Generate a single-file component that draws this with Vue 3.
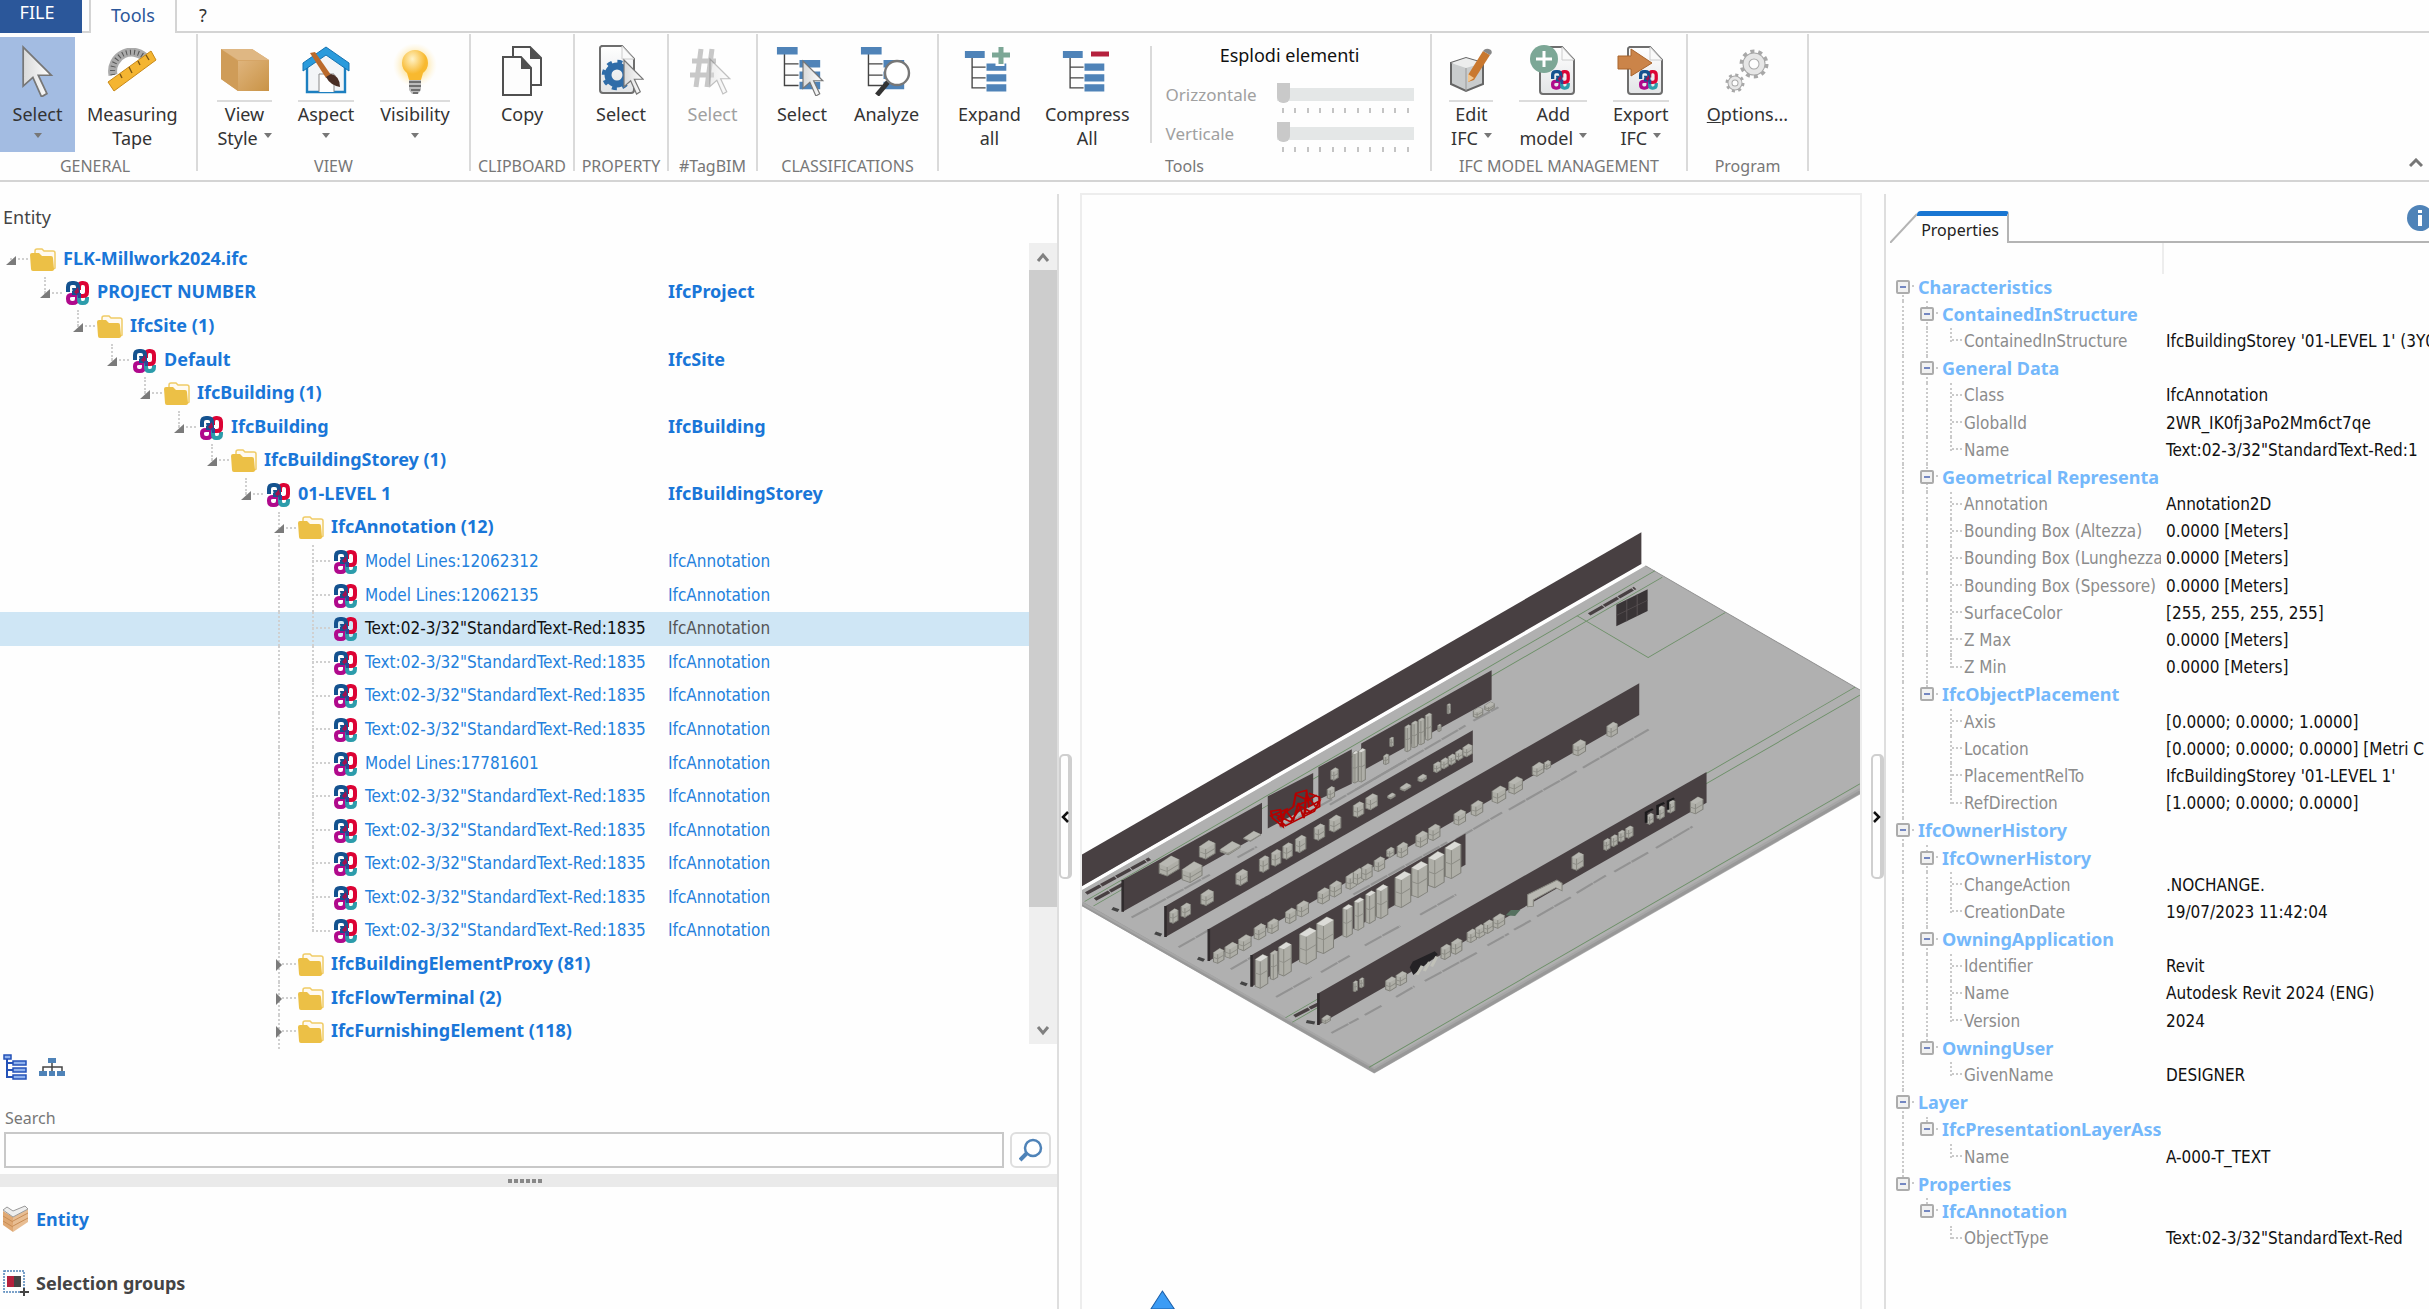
<script setup>
import { ref } from 'vue'

const search = ref('')
const horizontal = ref(0)
const vertical = ref(0)
const selectedRow = ref(11)

/* Ribbon */
const ribbonGroups = [
  { id: 'general', label: 'GENERAL', items: [
    { icon: 'cursor', lines: ['Select'], menu: true, active: true },
    { icon: 'tape', lines: ['Measuring', 'Tape'] },
  ] },
  { id: 'view', label: 'VIEW', items: [
    { icon: 'cube', lines: ['View', 'Style'], menu: true, split: true },
    { icon: 'house', lines: ['Aspect'], menu: true, split: true },
    { icon: 'bulb', lines: ['Visibility'], menu: true, split: true },
  ] },
  { id: 'clipboard', label: 'CLIPBOARD', items: [{ icon: 'copy', lines: ['Copy'] }] },
  { id: 'property', label: 'PROPERTY', items: [{ icon: 'pageGear', lines: ['Select'] }] },
  { id: 'tag', label: '#TagBIM', items: [{ icon: 'hash', lines: ['Select'], disabled: true }] },
  { id: 'classes', label: 'CLASSIFICATIONS', items: [
    { icon: 'treeCursor', lines: ['Select'] },
    { icon: 'treeLens', lines: ['Analyze'] },
  ] },
  { id: 'tools', label: 'Tools', explode: true, items: [
    { icon: 'treePlus', lines: ['Expand', 'all'] },
    { icon: 'treeMinus', lines: ['Compress', 'All'] },
  ] },
  { id: 'ifc', label: 'IFC MODEL MANAGEMENT', items: [
    { icon: 'edit', lines: ['Edit', 'IFC'], menu: true, split: true },
    { icon: 'add', lines: ['Add', 'model'], menu: true, split: true },
    { icon: 'export', lines: ['Export', 'IFC'], menu: true, split: true },
  ] },
  { id: 'program', label: 'Program', items: [{ icon: 'gears', lines: ['Options...'], accel: true }] },
]

/* Entity tree */
const annotationText = 'Text:02-3/32"StandardText-Red:1835'
const branch = (level, name, type, icon) => ({ level, name, type, icon, bold: true, open: true, last: true })
const leafNames = [
  'Model Lines:12062312', 'Model Lines:12062135', annotationText, annotationText, annotationText, annotationText,
  'Model Lines:17781601', annotationText, annotationText, annotationText, annotationText, annotationText,
]
const treeRows = [
  branch(0, 'FLK-Millwork2024.ifc', '', 'folder'),
  branch(1, 'PROJECT NUMBER', 'IfcProject', 'ifc'),
  branch(2, 'IfcSite (1)', '', 'folder'),
  branch(3, 'Default', 'IfcSite', 'ifc'),
  branch(4, 'IfcBuilding (1)', '', 'folder'),
  branch(5, 'IfcBuilding', 'IfcBuilding', 'ifc'),
  branch(6, 'IfcBuildingStorey (1)', '', 'folder'),
  branch(7, '01-LEVEL 1', 'IfcBuildingStorey', 'ifc'),
  { ...branch(8, 'IfcAnnotation (12)', '', 'folder'), last: false },
  ...leafNames.map((name, i) => ({ level: 9, name, type: 'IfcAnnotation', icon: 'ifc', leaf: true, last: i === 11, rails: [8] })),
  { ...branch(8, 'IfcBuildingElementProxy (81)', '', 'folder'), open: false, last: false },
  { ...branch(8, 'IfcFlowTerminal (2)', '', 'folder'), open: false, last: false },
  { ...branch(8, 'IfcFurnishingElement (118)', '', 'folder'), open: false, last: false },
]
const indent = (level) => Math.round(level * 33.5)

/* Property grid */
const sections = [
  ['Characteristics', [
    ['ContainedInStructure', [['ContainedInStructure', "IfcBuildingStorey '01-LEVEL 1' (3Y0"]]],
    ['General Data', [['Class', 'IfcAnnotation'], ['GlobalId', '2WR_IK0fj3aPo2Mm6ct7qe'], ['Name', 'Text:02-3/32"StandardText-Red:1']]],
    ['Geometrical Representa', [
      ['Annotation', 'Annotation2D'], ['Bounding Box (Altezza)', '0.0000 [Meters]'],
      ['Bounding Box (Lunghezza', '0.0000 [Meters]'], ['Bounding Box (Spessore)', '0.0000 [Meters]'],
      ['SurfaceColor', '[255, 255, 255, 255]'], ['Z Max', '0.0000 [Meters]'], ['Z Min', '0.0000 [Meters]']]],
    ['IfcObjectPlacement', [
      ['Axis', '[0.0000; 0.0000; 1.0000]'], ['Location', '[0.0000; 0.0000; 0.0000] [Metri C'],
      ['PlacementRelTo', "IfcBuildingStorey '01-LEVEL 1'"], ['RefDirection', '[1.0000; 0.0000; 0.0000]']]],
  ]],
  ['IfcOwnerHistory', [
    ['IfcOwnerHistory', [['ChangeAction', '.NOCHANGE.'], ['CreationDate', '19/07/2023 11:42:04']]],
    ['OwningApplication', [['Identifier', 'Revit'], ['Name', 'Autodesk Revit 2024 (ENG)'], ['Version', '2024']]],
    ['OwningUser', [['GivenName', 'DESIGNER']]],
  ]],
  ['Layer', [['IfcPresentationLayerAss', [['Name', 'A-000-T_TEXT']]]]],
  ['Properties', [['IfcAnnotation', [['ObjectType', 'Text:02-3/32"StandardText-Red']]]]],
]
const props = []
sections.forEach(([title, groups], s) => {
  const lastSection = s === sections.length - 1
  props.push({ level: 0, name: title, value: '', rails: [s === 0 ? 'start' : lastSection ? 'end' : 'full'] })
  groups.forEach(([group, fields], g) => {
    const lastGroup = g === groups.length - 1
    const outer = lastSection ? 'none' : 'full'
    props.push({ level: 1, name: group, value: '', rails: [outer, lastGroup ? 'end' : 'full'] })
    fields.forEach(([name, value], f) => {
      props.push({ level: 2, name, value, rails: [outer, lastGroup ? 'none' : 'full', f === fields.length - 1 ? 'end' : 'full'] })
    })
  })
})

/* Model scene */
const walls = [
  '118,992 385,790 385,870 118,1075', '396,773 483,712 483,795 396,857',
  '493,697 557,650 557,740 493,782', '575,635 825,443 825,520 575,708',
  '200,1060 789,600 789,683 200,1141', '283,1120 1108,477 1108,560 283,1204',
  '365,1188 775,870 775,952 365,1271', '493,1288 1237,709 1237,790 493,1371',
]
const boxes = [
  [188, 950, 38, 24], [265, 905, 30, 26], [232, 965, 38, 26], [305, 912, 38, 6], [350, 882, 32, 2],
  [517, 706, 14, 22], [510, 755, 14, 22], [559, 660, 10, 76], [570, 655, 13, 78], [618, 668, 10, 20], [630, 622, 7, 20],
  [659, 592, 11, 62], [672, 582, 11, 62], [685, 574, 11, 62], [698, 562, 12, 62], [740, 534, 6, 22], [722, 588, 6, 14],
  [790, 550, 18, 14], [812, 536, 18, 10],
  [208, 1076, 16, 26], [230, 1062, 18, 24], [268, 1030, 24, 24], [335, 976, 22, 26],
  [380, 938, 18, 30], [403, 922, 18, 30], [425, 904, 18, 30], [449, 886, 20, 30], [485, 856, 20, 28], [514, 834, 22, 28],
  [560, 798, 20, 26], [584, 778, 22, 26], [626, 772, 14, 5], [650, 750, 20, 5], [684, 724, 16, 8],
  [714, 690, 14, 18], [728, 680, 14, 18], [742, 670, 14, 18], [756, 658, 14, 18], [770, 646, 18, 20],
  [292, 1182, 20, 24], [314, 1168, 24, 24], [340, 1148, 24, 24], [370, 1118, 22, 26], [396, 1104, 20, 24],
  [430, 1076, 20, 26], [452, 1058, 22, 26], [492, 1024, 22, 26], [515, 1006, 22, 26],
  [546, 984, 20, 28], [560, 972, 20, 28], [576, 960, 20, 28], [600, 942, 20, 24], [624, 914, 14, 16], [644, 904, 20, 26],
  [680, 876, 22, 26], [704, 858, 22, 26], [753, 820, 22, 24], [786, 796, 22, 24], [826, 760, 26, 26], [858, 736, 26, 26],
  [903, 696, 22, 20], [926, 686, 12, 14], [981, 638, 24, 24], [1046, 590, 20, 24],
  [372, 1200, 24, 70], [401, 1184, 14, 66], [417, 1168, 24, 70],
  [457, 1134, 32, 72], [490, 1106, 32, 72],
  [540, 1066, 18, 72], [562, 1048, 18, 72], [584, 1030, 18, 72], [604, 1016, 22, 72],
  [640, 986, 30, 72], [672, 960, 30, 72], [704, 934, 30, 72], [736, 908, 30, 74],
  [500, 1354, 16, 10], [560, 1260, 8, 22], [572, 1252, 8, 20], [622, 1256, 20, 22], [642, 1242, 20, 22],
  [728, 1170, 18, 26], [748, 1156, 20, 26], [778, 1130, 18, 22], [794, 1118, 18, 22], [810, 1106, 18, 22], [828, 1092, 22, 22],
  [979, 932, 22, 30], [1040, 890, 12, 22], [1054, 880, 12, 22], [1068, 868, 12, 22], [1082, 858, 14, 22],
  [1123, 824, 12, 20], [1142, 806, 14, 24], [1162, 790, 14, 24], [1206, 788, 24, 26],
]
const body = ([x, y, w, h]) => `${x},${y} ${x + w * 0.6},${y - w * 0.55} ${x + w},${y - w * 0.3} ${x + w},${y + h - w * 0.3} ${x + w * 0.4},${y + h + w * 0.2} ${x},${y + h}`
const lid = ([x, y, w]) => `${x},${y} ${x + w * 0.6},${y - w * 0.55} ${x + w},${y - w * 0.3} ${x + w * 0.4},${y + w * 0.2}`
const edge = ([x, y, w, h]) => `M${x + w * 0.4} ${y + w * 0.2}V${y + h + w * 0.2}M${x} ${y + h / 2}l${w * 0.4} ${w * 0.2}l${w * 0.6} ${-w * 0.5}`
const shadows = [
  'M135 1090L285 978', 'M338 933L375 905', 'M420 855L520 780', 'M515 795L660 680', 'M565 755L775 588', 'M790 575L838 540',
  'M225 1168L395 1035', 'M325 1225L470 1112', 'M480 1103L560 1040', 'M560 1030L740 893', 'M757 885L845 815', 'M858 808L988 707', 'M1000 698L1126 598',
  'M412 1298L480 1246', 'M498 1233L553 1190', 'M582 1163L650 1112', 'M688 1083L757 1030',
  'M518 1392L570 1354', 'M582 1345L615 1320', 'M642 1298L677 1270', 'M697 1256L797 1182', 'M817 1163L858 1132', 'M868 1122L900 1098', 'M912 1087L978 1036', 'M988 1026L1044 980', 'M1060 970L1125 920', 'M1140 908L1210 852',
]
</script>

<template>
  <svg class="defs" width="0" height="0" aria-hidden="true">
    <defs>
      <linearGradient id="arrowFill" x1="0" x2="1"><stop offset="0" stop-color="#d9d9d9" /><stop offset="1" stop-color="#fff" /></linearGradient>
      <linearGradient id="woodFront" x1="0" y1="0" x2="1" y2="1"><stop offset="0" stop-color="#dfb47c" /><stop offset="1" stop-color="#c99346" /></linearGradient>
      <linearGradient id="pageFill" x1="0" y1="0" x2="0" y2="1"><stop offset="0" stop-color="#fff" /><stop offset="1" stop-color="#e2e4e6" /></linearGradient>
      <radialGradient id="glow"><stop offset="0.5" stop-color="#ffd35c" stop-opacity="0.9" /><stop offset="1" stop-color="#ffe9b0" stop-opacity="0" /></radialGradient>
      <radialGradient id="bulbFill" cx="0.4" cy="0.3"><stop offset="0" stop-color="#fff3c8" /><stop offset="1" stop-color="#f8b92f" /></radialGradient>
      <g id="pointer"><path d="M0 0V36L9 28L17 46L22 43L14 26H26Z" fill="url(#arrowFill)" stroke="#777" stroke-width="1.6" /></g>
      <g id="ifcMark" fill="none" stroke-width="4">
        <path d="M10 14H6Q2 14 2 17V18Q2 22 6 22H7Q11 22 11 18V12" stroke="#b0098c" />
        <path d="M13 14V18Q13 22 16 22H17Q21 22 21 18V16" stroke="#2c9cab" />
        <path d="M13 15H17Q21 15 21 11V6Q21 2 17 2H16Q13 2 13 6V9" stroke="#dc0334" />
        <path d="M2 11V6Q2 2 6 2H8Q12 2 12 6V12H6" stroke="#14528f" />
        <path d="M6 7H10V12H7Z" fill="#14528f" stroke="none" />
        <path d="M8 11L12 6L13 11L11 14Z" fill="#a1104f" stroke="none" />
        <path d="M11 12H15V17H12Z" fill="#2b4796" stroke="none" />
      </g>
      <g id="nodeTree">
        <path d="M9 8V42H24M9 19H24M9 31H24" fill="none" stroke="#444" stroke-width="1.5" />
        <path d="M1 1H23V9H1ZM25 15H47V23H25ZM25 27H47V35H25ZM25 38H47V46H25Z" fill="#4f83b8" />
      </g>
      <g id="page"><path d="M3 1H24L36 14V45Q36 48 33 48H5Q2 48 2 45V3Q2 1 5 1Z" fill="url(#pageFill)" stroke="#6e6e6e" stroke-width="2" /><path d="M24 1V14H36Z" fill="#fafafa" stroke="#ccc" /></g>
    </defs>
  </svg>

  <div class="app">
    <nav class="tabs" aria-label="Ribbon tabs">
      <button class="file-tab">FILE</button>
      <span class="tab-gap"></span>
      <button class="tab current">Tools</button>
      <button class="tab">?</button>
    </nav>

    <header class="ribbon">
      <section v-for="group in ribbonGroups" :key="group.id" class="group" :class="'group-' + group.id">
        <div class="group-body">
          <button v-for="(item, i) in group.items" :key="i" class="command" :class="{ active: item.active, split: item.split }" :disabled="item.disabled">
            <span class="command-icon">
              <svg v-if="item.icon === 'cursor'" width="34" height="52" viewBox="0 0 34 52"><use href="#pointer" x="2" y="2" transform="scale(1.08)" /></svg>
              <svg v-else-if="item.icon === 'tape'" width="54" height="46" viewBox="0 0 54 46">
                <path d="M8 27A19 19 0 0 1 42 12" fill="none" stroke="#aaa" stroke-width="9" /><path d="M8 27A19 19 0 0 1 42 12" fill="none" stroke="#555" stroke-width="5" stroke-dasharray="1 3" />
                <path d="M3 34L46 3L51 12L9 43Z" fill="#f4b532" stroke="#c98a18" /><path d="M15 26l2 4M24 19l3 6M33 13l2 4M41 7l3 5" stroke="#7a5514" stroke-width="1.4" />
              </svg>
              <svg v-else-if="item.icon === 'cube'" width="50" height="44" viewBox="0 0 50 44"><path d="M1 1H32L49 12V43H18L1 31Z" fill="#d6a566" /><path d="M18 13H49V43H18Z" fill="url(#woodFront)" /><path d="M1 1L18 13V43L1 31Z" fill="#cf9c58" /><path d="M1 1H32L49 12H18Z" fill="#dfb783" /></svg>
              <svg v-else-if="item.icon === 'house'" width="48" height="48" viewBox="0 0 48 48">
                <path d="M5 18L24 5L43 18V46H5Z" fill="#f3f5f7" stroke="#1c7fc0" stroke-width="2.4" /><path d="M17 46V28H32V46" fill="#fff" stroke="#888" />
                <path d="M1 17L24 1L47 17V25L24 9L1 25Z" fill="#2a9bdc" stroke="#1673b1" /><path d="M8 7L13 6L29 29L24 32Z" fill="#bb6a2b" /><path d="M24 31L29 28Q38 30 38 41Q28 39 24 31Z" fill="#4a2f25" />
              </svg>
              <svg v-else-if="item.icon === 'bulb'" width="52" height="52" viewBox="0 0 52 52"><circle cx="26" cy="21" r="22" fill="url(#glow)" opacity="0.6" /><path d="M26 6A13 13 0 0 1 39 19Q39 25 34 29L32 36H20L18 29Q13 25 13 19A13 13 0 0 1 26 6Z" fill="url(#bulbFill)" /><path d="M20 36H32V46L29 50H23L20 46Z" fill="#bbb" /><path d="M20 38H32M20 42H32M22 46H31M24 49H29" stroke="#555" stroke-width="1.6" /></svg>
              <svg v-else-if="item.icon === 'copy'" width="40" height="50" viewBox="0 0 40 50"><g fill="#fdfdfd" stroke="#505050" stroke-width="2"><path d="M11 1H28L39 12V39H11Z" /><path d="M1 11H19L29 22V49H1Z" /></g><path d="M28 1V13H39ZM19 11V23H29Z" fill="#505050" /></svg>
              <svg v-else-if="item.icon === 'pageGear'" width="46" height="52" viewBox="0 0 46 52"><use href="#page" /><circle cx="19" cy="30" r="9" fill="none" stroke="#2f6ca8" stroke-width="7" /><circle cx="19" cy="30" r="13.5" fill="none" stroke="#2f6ca8" stroke-width="3.5" stroke-dasharray="5 5.6" /><use href="#pointer" transform="translate(26 15) scale(.74)" /></svg>
              <svg v-else-if="item.icon === 'hash'" width="46" height="50" viewBox="0 0 46 50"><path d="M11 3L6 41M22 3L17 41M2 15H26M0 29H24" stroke="#c8c8c8" stroke-width="5" /><g opacity="0.45"><use href="#pointer" transform="translate(20 13) scale(.76)" /></g></svg>
              <svg v-else-if="item.icon === 'treeCursor'" width="52" height="50" viewBox="0 0 52 50"><use href="#nodeTree" transform="scale(.94)" /><use href="#pointer" transform="translate(27 15) scale(.76)" /></svg>
              <svg v-else-if="item.icon === 'treeLens'" width="52" height="50" viewBox="0 0 52 50"><use href="#nodeTree" transform="scale(.94)" /><path d="M28 36L17 49" stroke="#333" stroke-width="5" /><circle cx="37" cy="27" r="12" fill="#fff" stroke="#777" stroke-width="2.4" /></svg>
              <svg v-else-if="item.icon === 'treePlus'" width="50" height="50" viewBox="0 0 50 50"><use href="#nodeTree" transform="translate(0 4) scale(.9)" /><path d="M36 0V20M27 10H46" stroke="#fefefe" stroke-width="9" /><path d="M37 1V18M28 9H46" stroke="#7ca796" stroke-width="5" /></svg>
              <svg v-else-if="item.icon === 'treeMinus'" width="50" height="50" viewBox="0 0 50 50"><use href="#nodeTree" transform="translate(0 4) scale(.9)" /><path d="M29 8H47" stroke="#b5213d" stroke-width="5" /></svg>
              <svg v-else-if="item.icon === 'edit'" width="44" height="46" viewBox="0 0 44 46"><path d="M2 16L17 11L34 16V37L17 44L2 37Z" fill="#c9cccd" stroke="#666" stroke-width="2" /><path d="M2 16L17 21L34 16L17 11Z" fill="#eceded" /><path d="M17 21V44" stroke="#999" /><path d="M34 4L41 8L25 33L19 35V28Z" fill="#c9782f" /><path d="M19 35V27L25 31Z" fill="#f3c78f" /><path d="M34 4Q37 0 42 3Q44 6 41 8Z" fill="#888" /></svg>
              <svg v-else-if="item.icon === 'add'" width="48" height="52" viewBox="0 0 48 52"><use href="#page" transform="translate(9 2)" /><use href="#ifcMark" transform="translate(22 26) scale(.82)" /><circle cx="15" cy="15" r="14" fill="#7ca796" /><path d="M15 7V23M7 15H23" stroke="#fff" stroke-width="3" /></svg>
              <svg v-else-if="item.icon === 'export'" width="48" height="52" viewBox="0 0 48 52"><use href="#page" transform="translate(9 2)" /><use href="#ifcMark" transform="translate(22 26) scale(.82)" /><path d="M1 12H14V5L35 19L14 32V25H1Z" fill="#cb8449" stroke="#a9642c" /></svg>
              <svg v-else width="46" height="46" viewBox="0 0 46 46"><g fill="none"><circle cx="30" cy="16" r="8" stroke="#a8a8a8" stroke-width="7" /><circle cx="30" cy="16" r="12.5" stroke="#a8a8a8" stroke-width="4" stroke-dasharray="4 3.85" /><circle cx="30" cy="16" r="8" stroke="#e6e6e6" stroke-width="5" /><circle cx="11" cy="35" r="5" stroke="#a8a8a8" stroke-width="5" /><circle cx="11" cy="35" r="8" stroke="#a8a8a8" stroke-width="3" stroke-dasharray="3 3.28" /><circle cx="11" cy="35" r="5" stroke="#e6e6e6" stroke-width="3" /></g></svg>
            </span>
            <span class="command-line"><template v-if="item.accel"><u>O</u>ptions...</template><template v-else>{{ item.lines[0] }}</template></span>
            <span class="command-line">{{ item.lines[1] }}<i v-if="item.menu" class="caret" :class="{ beside: item.lines[1] }"></i></span>
          </button>
          <div v-if="group.explode" class="explode">
            <div class="explode-title">Esplodi elementi</div>
            <label class="slider"><span>Orizzontale</span><span class="slider-control"><input v-model="horizontal" type="range" min="0" max="10" disabled /><span class="ticks"><i v-for="n in 11" :key="n"></i></span></span></label>
            <label class="slider"><span>Verticale</span><span class="slider-control"><input v-model="vertical" type="range" min="0" max="10" disabled /><span class="ticks"><i v-for="n in 11" :key="n"></i></span></span></label>
          </div>
        </div>
        <div class="group-label">{{ group.label }}</div>
      </section>
      <button class="collapse" aria-label="Collapse ribbon"><svg width="14" height="10" viewBox="0 0 14 10"><path d="M1 8L7 2L13 8" fill="none" stroke="#777" stroke-width="3" /></svg></button>
    </header>

    <main class="work">
      <aside class="entity">
        <h2 class="pane-title">Entity</h2>
        <div class="tree-box">
          <div class="tree" role="tree">
            <div v-for="(row, i) in treeRows" :key="i" class="tree-row" :class="{ selected: i === selectedRow, bold: row.bold }" role="treeitem" @click="selectedRow = i">
              <div class="tree-name">
                <span v-for="rail in row.rails" :key="rail" class="rail full" :style="{ left: 10 + indent(rail) + 'px' }"></span>
                <span v-if="row.level" class="rail" :class="row.last ? 'half' : 'full'" :style="{ left: 10 + indent(row.level) + 'px' }"></span>
                <span class="branch" :style="{ left: 10 + indent(row.level) + 'px' }"></span>
                <span class="indent" :style="{ width: 6 + indent(row.level) + 'px' }"></span>
                <svg class="twisty" width="10" height="14" viewBox="0 0 10 14"><path v-if="!row.leaf && row.open" d="M10 3V12H0Z" fill="#7b7b7b" /><path v-else-if="!row.leaf" d="M2 1L8 7L2 13Z" fill="#7b7b7b" /></svg>
                <svg v-if="row.icon === 'folder'" class="node-icon" width="26" height="24" viewBox="0 0 26 24"><path d="M5 5V3Q5 1 7 1H12L14 3H23Q25 3 25 5V20L22 22" fill="#fffaf0" stroke="#f0cb66" stroke-width="1.5" /><path d="M0 7Q0 5 2 5H9L12 8H21Q23 8 23 10L24 21Q24 23 22 23H3Q1 23 1 21Z" fill="#ecc046" /></svg>
                <svg v-else class="node-icon" width="26" height="24" viewBox="-2 0 26 24"><use href="#ifcMark" /></svg>
                <span class="tree-label">{{ row.name }}</span>
              </div>
              <div class="tree-type">{{ row.type }}</div>
            </div>
          </div>
          <div class="scrollbar">
            <button aria-label="Scroll up"><svg width="14" height="12" viewBox="0 0 14 12"><path d="M2 10L7 4L12 10" fill="none" stroke="#808080" stroke-width="3" /></svg></button>
            <span class="thumb"></span>
            <span class="track"></span>
            <button aria-label="Scroll down"><svg width="14" height="12" viewBox="0 0 14 12"><path d="M2 2L7 8L12 2" fill="none" stroke="#808080" stroke-width="3" /></svg></button>
          </div>
        </div>

        <div class="tree-tools">
          <button aria-label="Tree view"><svg width="24" height="26" viewBox="0 0 24 26"><path d="M4 4V23H10M4 9H10M4 16H10" fill="none" stroke="#2452b8" stroke-width="2" /><g fill="#8fb2ee" stroke="#2452b8" stroke-width="1.5"><path d="M1 1H8V5H1Z" /><path d="M10 7H23V11H10Z" /><path d="M10 14H23V18H10Z" /><path d="M10 21H23V25H10Z" /></g></svg></button>
          <button aria-label="Structure view"><svg width="26" height="20" viewBox="0 0 26 20"><path d="M13 4V14M4 14V10H23V14" fill="none" stroke="#444" stroke-width="1.5" /><path d="M9 1H17V6H9ZM0 14H8V19H0ZM10 14H16V19H10ZM18 14H26V19H18Z" fill="#4f83b8" /></svg></button>
        </div>

        <label class="search-label" for="entity-search">Search</label>
        <div class="search">
          <input id="entity-search" v-model="search" type="text" />
          <button aria-label="Search"><svg width="24" height="24" viewBox="0 0 24 24"><path d="M9 14L1 22" stroke="#4f83b8" stroke-width="4" /><circle cx="14" cy="10" r="8" fill="#fff" stroke="#4f83b8" stroke-width="2.5" /></svg></button>
        </div>
        <div class="splitter"><i v-for="n in 6" :key="n"></i></div>

        <button class="mode current"><svg width="28" height="28" viewBox="0 0 28 28"><path d="M1 6L11 12V27L1 20Z" fill="#dfa873" /><path d="M11 12L26 4V17L11 27Z" fill="#e8bd92" /><path d="M1 5L5 2L11 6L23 1L26 4L11 12Z" fill="#eee" stroke="#999" /><path d="M11 16L26 8M11 21L26 13M1 11L11 17M1 16L11 22" stroke="#c98d55" /></svg>Entity</button>
        <button class="mode"><svg width="28" height="28" viewBox="0 0 28 28"><path d="M2 2H22V23H2Z" fill="none" stroke="#4f83b8" stroke-width="1.5" stroke-dasharray="2 1" /><path d="M5 7H12V18H5Z" fill="#b5213d" /><path d="M12 7H19V18H12Z" fill="#444" /><path d="M22 19V27M18 23H27" stroke="#444" stroke-width="2" /></svg>Selection groups</button>
      </aside>

      <section class="stage">
        <button class="handle" aria-label="Collapse left pane"><svg width="10" height="14" viewBox="0 0 10 14"><path d="M8 2L3 7L8 12" fill="none" stroke="#111" stroke-width="2.5" /></svg></button>
        <div class="frame">
          <svg class="scene" viewBox="40 -800 1491 2914" preserveAspectRatio="none" role="img" aria-label="3D model">
            <path d="M40 1018L1120 170L1531 495V768L600 1498L40 1060Z" fill="#b0b0b0" />
            <path d="M40 1054L600 1490L1531 760" fill="none" stroke="#989898" stroke-width="10" />
            <path d="M40 1052L600 1484L1531 754" fill="none" stroke="#a6a6a6" stroke-width="5" />
            <path d="M1120 170L1531 495" stroke="#8c8c8c" stroke-width="2" />
            <path d="M40 925L1112 82V165L40 1008Z" fill="#484042" />
            <path d="M40 1013L1112 171" stroke="#fff" stroke-width="6" />
            <path d="M45 1048L1138 183M62 1060L1152 200M988 300L1125 410L1273 292M430 1352L1522 487M443 1364L1531 508M590 1482L1531 740" fill="none" stroke="#6b8f66" stroke-width="2" />
            <path d="M1012 297L1100 228M48 1027L170 936M65 1043L118 1003M447 1348L493 1316" stroke="#484042" stroke-width="8" stroke-dasharray="34 2" />
            <path v-for="(d, i) in shadows" :key="'s' + i" :d="d" stroke="#929292" stroke-width="5" stroke-dasharray="40 2" />
            <polygon v-for="(points, i) in walls" :key="'w' + i" :points="points" fill="#484042" />
            <path d="M118 992V1075M200 1060V1141M283 1120V1204M365 1188V1271M493 1288V1371" stroke="#302b2d" stroke-width="5" />
            <path d="M1064 272L1124 231V288L1064 328Z" fill="#393436" /><path d="M1084 259V315M1104 245V301M1064 300L1124 260" stroke="#575052" stroke-width="2" />
            <g v-for="(b, i) in boxes" :key="'b' + i" stroke="#80807a" stroke-width="2">
              <polygon :points="body(b)" fill="#aeaea7" />
              <polygon :points="lid(b)" :fill="b[3] > 69 ? '#dcdcd8' : '#b8b8b2'" stroke="none" />
              <path :d="edge(b)" fill="none" stroke="#8c8c85" />
            </g>
            <path d="M894 1030L950 992L960 1000V1020L948 1012L905 1044V1060L894 1062Z" fill="#b9b9b2" stroke="#85857e" stroke-width="2" />
            <path d="M668 1220L674 1205L716 1178L722 1186L675 1240Z" fill="#242225" /><path d="M682 1240L692 1216M696 1230L706 1206M710 1218L720 1192" stroke="#c0c0b8" stroke-width="6" />
            <path d="M852 1084L862 1070L880 1070L870 1086Z" fill="#55705f" />
            <path d="M1121 842V815L1134 806M1143 822V798L1156 790M1163 808V786L1175 778" fill="none" stroke="#1c1b1c" stroke-width="5" />
            <path d="M98 1066L110 1072M180 1130L192 1136M262 1196L274 1202M344 1260L356 1266M470 1362L486 1366" stroke="#444" stroke-width="8" />
            <g fill="none" stroke="#b50000" stroke-width="4"><path d="M402 812L420 808L425 852L405 830ZM415 830L445 800L450 765L470 757L475 800L495 785L485 812L430 850Z" /><path d="M448 768L468 780V820M450 800L490 770M410 820L440 840L460 800L480 815M420 852L430 810L445 835L455 790L465 830L470 770L488 800M475 765L495 775V800L470 818M400 825L435 805" /></g>
            <path d="M194 2067L217 2114H172Z" fill="#3b9cf5" stroke="#1b5ea8" stroke-width="2" />
          </svg>
        </div>
        <button class="handle" aria-label="Collapse right pane"><svg width="10" height="14" viewBox="0 0 10 14"><path d="M2 2L7 7L2 12" fill="none" stroke="#111" stroke-width="2.5" /></svg></button>
      </section>

      <aside class="inspector">
        <div class="inspector-tabs">
          <svg class="slant" width="27" height="32" viewBox="0 0 27 32"><path d="M0 32L27 3" stroke="#b4b4b4" stroke-width="2" /></svg>
          <button class="inspector-tab">Properties</button>
          <button class="info" aria-label="Information"><svg width="26" height="26" viewBox="0 0 26 26"><circle cx="13" cy="13" r="13" fill="#4f83b8" /><path d="M11 5H15V8H11ZM11 10H15V21H11Z" fill="#fff" /></svg></button>
        </div>
        <div class="column-head"></div>
        <table class="props">
          <colgroup><col class="name-col" /><col /></colgroup>
          <tbody>
            <tr v-for="(row, i) in props" :key="i" :class="'level' + row.level">
              <th scope="row">
                <div class="prop-name">
                  <span v-for="(rail, r) in row.rails" :key="r" class="prop-rail" :class="rail" :style="{ left: 16 + r * 24 + 'px' }"></span>
                  <span class="prop-branch"></span>
                  <svg v-if="row.level < 2" class="toggle" width="14" height="14" viewBox="0 0 14 14"><rect x="1" y="1" width="12" height="12" rx="1" fill="#f1f1f1" stroke="#acacac" stroke-width="2" /><path d="M4 7H10" stroke="#4a63b0" stroke-width="1.5" /></svg>
                  <span>{{ row.name }}</span>
                </div>
              </th>
              <td>{{ row.value }}</td>
            </tr>
          </tbody>
        </table>
      </aside>
    </main>
  </div>
</template>

<style>
body { background: #fefefe; overflow: hidden; }
</style>

<style scoped>
* { box-sizing: border-box; }
.defs { position: absolute; }
button { font: inherit; color: inherit; background: none; border: 0; padding: 0; margin: 0; }
svg { display: block; flex: none; }
.app { display: flex; flex-direction: column; min-height: 100vh; font-family: "Noto Sans", "Open Sans", sans-serif; font-size: 16px; color: #333; background: #fefefe; white-space: nowrap; }

.tabs { display: flex; height: 33px; font-size: 18px; line-height: 24px; box-shadow: inset 0 -2px #d4d4d4; }
.file-tab { width: 82px; background: #2b579a; color: #fff; padding: 0 8px 10px 0; }
.tab-gap { width: 7px; }
.tab { width: 52px; padding-bottom: 4px; }
.tab.current { width: 88px; color: #2b579a; background: #fefefe; border: solid #d4d4d4; border-width: 0 2px; }

.ribbon { display: flex; height: 149px; border-bottom: 2px solid #d4d4d4; }
.group { position: relative; display: flex; flex-direction: column; padding-top: 4px; }
.group::after { content: ""; position: absolute; right: 0; top: 1px; width: 2px; height: 137px; background: #dadada; }
.group-general { width: 198px; }
.group-view { width: 273px; }
.group-clipboard { width: 104px; }
.group-property { width: 94px; }
.group-tag { width: 89px; }
.group-classes { width: 181px; }
.group-tools { width: 493px; }
.group-ifc { width: 256px; }
.group-program { width: 121px; }
.group-body { display: flex; justify-content: center; gap: 18px; height: 117px; padding-right: 2px; }
.group-general .group-body { justify-content: flex-start; gap: 8px; }
.group-tools .group-body { justify-content: flex-start; gap: 16px; padding-left: 15px; }
.group-label { font-size: 16px; line-height: 28px; text-align: center; color: #777; padding-right: 2px; }
.group-general .group-label { padding-right: 8px; }
.command { display: flex; flex-direction: column; align-items: center; font-size: 18px; line-height: 24px; padding: 0 4px; }
.command.active { width: 75px; background: #a3bce2; }
.command:disabled { color: #a0a0a0; }
.command-icon { display: flex; justify-content: center; align-items: center; align-self: stretch; height: 65px; padding-top: 2px; }
.split .command-icon { border-bottom: 2px solid #dcdcdc; }
.command-line { display: flex; align-items: center; height: 24px; }
.caret { border: solid transparent; border-width: 5px 4px 0; border-top-color: #777; margin-bottom: 6px; }
.caret.beside { margin-left: 6px; }
.explode { position: relative; flex: none; padding: 4px 0 0 16px; width: 280px; }
.explode::before { content: ""; position: absolute; left: 0; top: 9px; width: 2px; height: 97px; background: #dadada; }
.explode-title { font-size: 18px; line-height: 28px; text-align: center; color: #111; padding-right: 16px; }
.slider { display: flex; justify-content: space-between; height: 39px; font-size: 17px; line-height: 24px; color: #a0a0a0; padding: 14px 16px 0 0; }
.slider-control { display: flex; flex-direction: column; width: 137px; gap: 5px; }
.slider input { appearance: none; width: 137px; height: 20px; margin: 0; background: linear-gradient(#e4e7e7, #e4e7e7) 0 5px / 100% 13px no-repeat; }
.slider input::-webkit-slider-thumb { appearance: none; width: 13px; height: 20px; background: #c9c9c9; border-radius: 0 0 6px 6px; }
.ticks { display: flex; justify-content: space-between; padding: 0 5px; }
.ticks i { width: 2px; height: 5px; background: #c4c4c4; }
.collapse { margin: auto 6px 12px auto; }

.work { flex: 1; display: grid; grid-template-columns: 1059fr 825fr 545fr; }
.entity { display: flex; flex-direction: column; min-width: 0; margin-top: 12px; border-right: 2px solid #dedede; }
.pane-title { margin: 9px 0 12px 3px; font-size: 18px; line-height: 28px; font-weight: 400; color: #444; }
.tree-box { display: flex; height: 801px; font-family: "DejaVu Sans Condensed", "Noto Sans", sans-serif; font-size: 17px; line-height: 24px; }
.tree { flex: 1; min-width: 0; display: grid; grid-auto-rows: 1fr; height: 806px; }
.tree-row { display: flex; color: #2381dd; min-height: 0; }
.tree-row.bold { font-family: "Noto Sans", sans-serif; font-size: 18px; font-weight: 700; color: #1976d8; }
.tree-row.selected { background: #cfe6f5; color: #111; }
.selected .tree-type { color: #555; }
.tree-name { position: relative; display: flex; align-items: center; width: 662px; overflow: hidden; }
.twisty { position: relative; margin-right: 14px; }
.node-icon { position: relative; margin-right: 7px; }
.tree-label, .tree-type { padding-bottom: 2px; }
.bold .tree-label, .bold .tree-type { padding-bottom: 4px; }
.tree-type { display: flex; align-items: center; padding-left: 6px; }
.rail { position: absolute; top: 0; width: 0; border-left: 2px dotted #d0d0d0; }
.rail.full { bottom: 0; }
.rail.half { height: 16px; }
.branch { position: absolute; top: 15px; width: 18px; border-top: 2px dotted #d0d0d0; }
.scrollbar { display: flex; flex-direction: column; width: 28px; background: #efefef; }
.scrollbar button { display: flex; justify-content: center; align-items: center; height: 27px; }
.thumb { flex: 637; background: #cdcdcd; }
.track { flex: 110; }
.tree-tools { display: flex; align-items: center; gap: 12px; padding: 8px 0 0 3px; height: 38px; }
.search-label { margin: 24px 0 2px 5px; line-height: 24px; color: #777; }
.search { display: flex; gap: 6px; padding: 0 6px 6px 4px; }
.search input { flex: 1; min-width: 0; height: 36px; border: 2px solid #c8c8c8; background: #fefefe; font: inherit; }
.search button { display: flex; justify-content: center; align-items: center; width: 41px; height: 36px; border: 2px solid #dedede; border-radius: 6px; }
.splitter { display: flex; justify-content: center; align-items: center; gap: 2px; height: 13px; padding-right: 8px; background: #eaeaea; }
.splitter i { width: 4px; height: 4px; background: #888; }
.mode { display: flex; align-items: center; gap: 6px; height: 36px; margin-top: 14px; padding-left: 2px; font-size: 18px; font-weight: 700; color: #444; }
.mode + .mode { margin-top: 28px; }
.mode.current { color: #1976d8; }

.stage { display: flex; min-width: 0; }
.handle { display: flex; justify-content: center; align-items: center; align-self: flex-start; width: 13px; height: 125px; margin-top: 572px; border: 2px solid #cfcfcf; border-right-width: 4px; border-radius: 5px; }
.frame { flex: 1; margin: 11px 9px 0 8px; border: solid #ededed; border-width: 2px 2px 0; min-width: 0; position: relative; }
.scene { position: absolute; inset: 0; width: 100%; height: 100%; }

.inspector { min-width: 0; overflow: hidden; border-left: 2px solid #dedede; margin-top: 12px; }
.inspector-tabs { display: flex; align-items: flex-end; height: 49px; padding-left: 4px; background: linear-gradient(#b4b4b4, #b4b4b4) 122px 100% / 100% 2px no-repeat; }
.inspector-tab { width: 92px; height: 32px; padding-right: 4px; border-top: 5px solid #1976d2; border-right: 2px solid #b4b4b4; border-radius: 4px 3px 0 0; line-height: 24px; color: #222; }
.info { margin: 0 -4px 12px auto; }
.column-head { width: 278px; height: 31px; border-right: 2px solid #ededed; }
.props { table-layout: fixed; width: 100%; height: 979px; border-collapse: collapse; font-family: "DejaVu Sans Condensed", "Noto Sans", sans-serif; font-size: 17px; line-height: 22px; }
.name-col { width: 275px; }
.props th, .props td { padding: 0; font-weight: 400; text-align: left; overflow: hidden; }
.props td { padding: 0 0 2px 5px; color: #111; }
.props th { height: 27px; color: #8c8c8c; }
.prop-name { position: relative; display: flex; align-items: center; gap: 8px; height: 100%; padding-bottom: 2px; }
.level0 .prop-name { padding-left: 10px; }
.level1 .prop-name { padding-left: 34px; }
.level2 .prop-name { padding-left: 78px; }
.props .level0 th, .props .level1 th { font-family: "Noto Sans", sans-serif; color: #74b8fb; font-size: 18px; font-weight: 700; }
.toggle { position: relative; }
.prop-rail { position: absolute; top: 0; bottom: 0; border-left: 2px dotted #cacaca; }
.prop-rail.end { bottom: 50%; }
.prop-rail.start { top: 50%; }
.prop-rail.none { display: none; }
.prop-branch { position: absolute; top: 11px; width: 10px; border-top: 2px dotted #cacaca; }
.level0 .prop-branch { left: 18px; }
.level1 .prop-branch { left: 42px; }
.level2 .prop-branch { left: 66px; }
</style>
